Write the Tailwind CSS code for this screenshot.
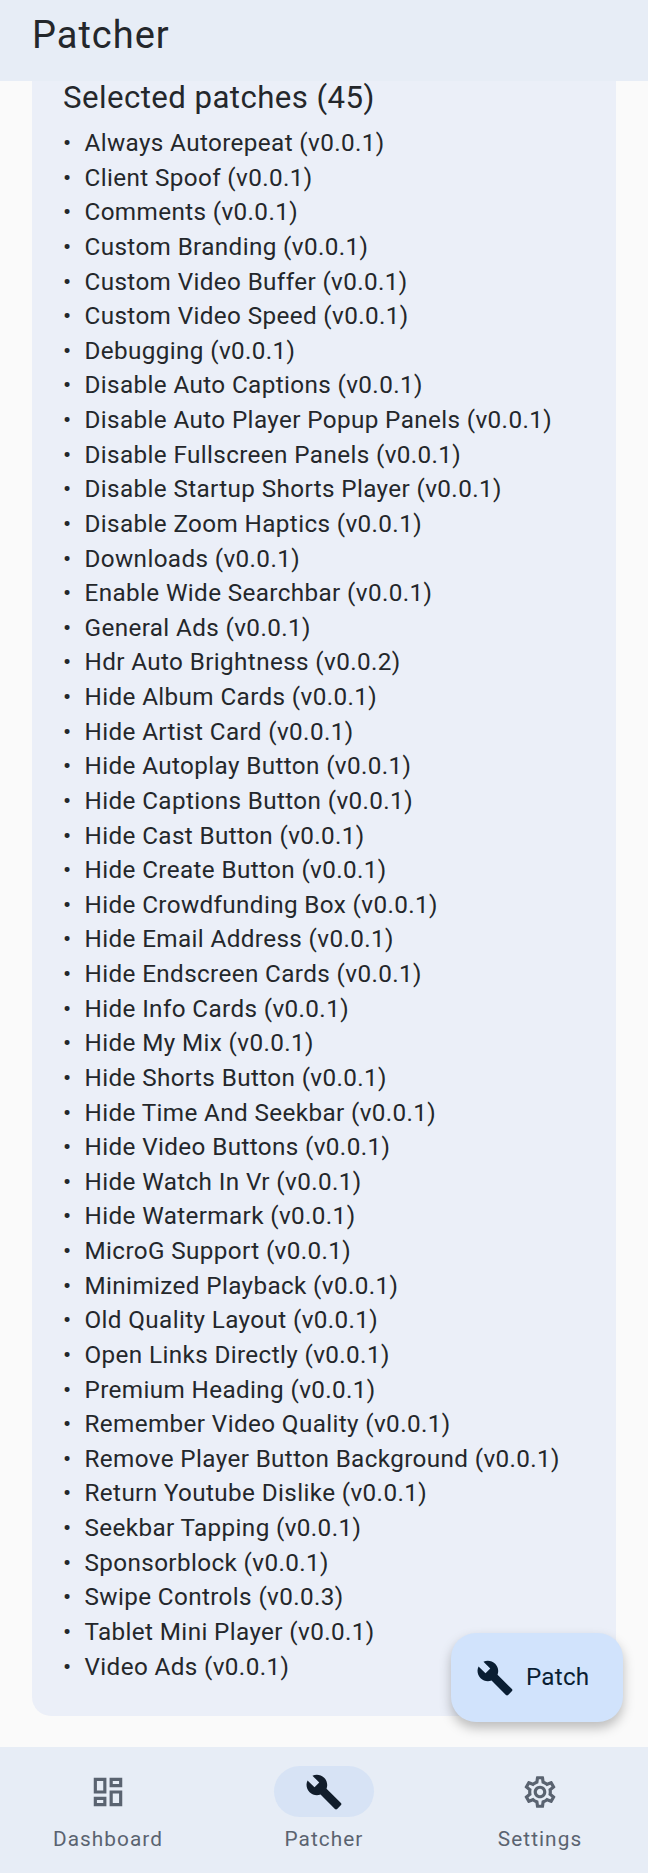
<!DOCTYPE html>
<html lang="en">
<head>
  <meta charset="UTF-8">
  <meta name="viewport" content="width=device-width, initial-scale=1.0">
  <title>Patcher</title>
  <script src="https://cdn.jsdelivr.net/npm/@tailwindcss/browser@4"></script>
</head>
<body class="bg-[#fafafa] font-['Roboto',sans-serif] text-[#24272b]">
  <div class="relative flex h-[1873px] w-[648px] flex-col overflow-hidden">
    <!-- App bar -->
    <header class="flex h-[81px] shrink-0 items-start bg-[#e7edf6] px-[32px] pt-[9px]">
      <h1 class="text-[38px] leading-[52px] tracking-[1px]">Patcher</h1>
    </header>

    <main class="flex-1">
      <!-- Selected patches card -->
      <section class="mx-[32px] h-[1635px] rounded-b-[19px] bg-[#ebeff8] pl-[31px]">
        <h2 class="text-[31.2px] leading-[34px] tracking-[0.43px]">Selected patches (45)</h2>
        <ul class="mt-[11px] text-[24.25px] leading-[34.63px] tracking-[0.38px]">
          <li class="flex"><span class="w-[21.5px]">•</span>Always Autorepeat (v0.0.1)</li>
          <li class="flex"><span class="w-[21.5px]">•</span>Client Spoof (v0.0.1)</li>
          <li class="flex"><span class="w-[21.5px]">•</span>Comments (v0.0.1)</li>
          <li class="flex"><span class="w-[21.5px]">•</span>Custom Branding (v0.0.1)</li>
          <li class="flex"><span class="w-[21.5px]">•</span>Custom Video Buffer (v0.0.1)</li>
          <li class="flex"><span class="w-[21.5px]">•</span>Custom Video Speed (v0.0.1)</li>
          <li class="flex"><span class="w-[21.5px]">•</span>Debugging (v0.0.1)</li>
          <li class="flex"><span class="w-[21.5px]">•</span>Disable Auto Captions (v0.0.1)</li>
          <li class="flex"><span class="w-[21.5px]">•</span>Disable Auto Player Popup Panels (v0.0.1)</li>
          <li class="flex"><span class="w-[21.5px]">•</span>Disable Fullscreen Panels (v0.0.1)</li>
          <li class="flex"><span class="w-[21.5px]">•</span>Disable Startup Shorts Player (v0.0.1)</li>
          <li class="flex"><span class="w-[21.5px]">•</span>Disable Zoom Haptics (v0.0.1)</li>
          <li class="flex"><span class="w-[21.5px]">•</span>Downloads (v0.0.1)</li>
          <li class="flex"><span class="w-[21.5px]">•</span>Enable Wide Searchbar (v0.0.1)</li>
          <li class="flex"><span class="w-[21.5px]">•</span>General Ads (v0.0.1)</li>
          <li class="flex"><span class="w-[21.5px]">•</span>Hdr Auto Brightness (v0.0.2)</li>
          <li class="flex"><span class="w-[21.5px]">•</span>Hide Album Cards (v0.0.1)</li>
          <li class="flex"><span class="w-[21.5px]">•</span>Hide Artist Card (v0.0.1)</li>
          <li class="flex"><span class="w-[21.5px]">•</span>Hide Autoplay Button (v0.0.1)</li>
          <li class="flex"><span class="w-[21.5px]">•</span>Hide Captions Button (v0.0.1)</li>
          <li class="flex"><span class="w-[21.5px]">•</span>Hide Cast Button (v0.0.1)</li>
          <li class="flex"><span class="w-[21.5px]">•</span>Hide Create Button (v0.0.1)</li>
          <li class="flex"><span class="w-[21.5px]">•</span>Hide Crowdfunding Box (v0.0.1)</li>
          <li class="flex"><span class="w-[21.5px]">•</span>Hide Email Address (v0.0.1)</li>
          <li class="flex"><span class="w-[21.5px]">•</span>Hide Endscreen Cards (v0.0.1)</li>
          <li class="flex"><span class="w-[21.5px]">•</span>Hide Info Cards (v0.0.1)</li>
          <li class="flex"><span class="w-[21.5px]">•</span>Hide My Mix (v0.0.1)</li>
          <li class="flex"><span class="w-[21.5px]">•</span>Hide Shorts Button (v0.0.1)</li>
          <li class="flex"><span class="w-[21.5px]">•</span>Hide Time And Seekbar (v0.0.1)</li>
          <li class="flex"><span class="w-[21.5px]">•</span>Hide Video Buttons (v0.0.1)</li>
          <li class="flex"><span class="w-[21.5px]">•</span>Hide Watch In Vr (v0.0.1)</li>
          <li class="flex"><span class="w-[21.5px]">•</span>Hide Watermark (v0.0.1)</li>
          <li class="flex"><span class="w-[21.5px]">•</span>MicroG Support (v0.0.1)</li>
          <li class="flex"><span class="w-[21.5px]">•</span>Minimized Playback (v0.0.1)</li>
          <li class="flex"><span class="w-[21.5px]">•</span>Old Quality Layout (v0.0.1)</li>
          <li class="flex"><span class="w-[21.5px]">•</span>Open Links Directly (v0.0.1)</li>
          <li class="flex"><span class="w-[21.5px]">•</span>Premium Heading (v0.0.1)</li>
          <li class="flex"><span class="w-[21.5px]">•</span>Remember Video Quality (v0.0.1)</li>
          <li class="flex"><span class="w-[21.5px]">•</span>Remove Player Button Background (v0.0.1)</li>
          <li class="flex"><span class="w-[21.5px]">•</span>Return Youtube Dislike (v0.0.1)</li>
          <li class="flex"><span class="w-[21.5px]">•</span>Seekbar Tapping (v0.0.1)</li>
          <li class="flex"><span class="w-[21.5px]">•</span>Sponsorblock (v0.0.1)</li>
          <li class="flex"><span class="w-[21.5px]">•</span>Swipe Controls (v0.0.3)</li>
          <li class="flex"><span class="w-[21.5px]">•</span>Tablet Mini Player (v0.0.1)</li>
          <li class="flex"><span class="w-[21.5px]">•</span>Video Ads (v0.0.1)</li>
        </ul>
      </section>
    </main>

    <!-- Patch FAB -->
    <button class="absolute left-[451px] top-[1633px] flex h-[89px] w-[172px] items-center rounded-[25px] bg-[#d1e3fc] pl-[25px] text-[24.25px] tracking-[0.2px] text-[#0a1e33] shadow-[0_6px_12px_rgba(0,0,0,0.25)]">
      <svg class="h-[38px] w-[38px]" viewBox="0 0 24 24" fill="currentColor"><path d="M22.7 19l-9.1-9.1c.9-2.3.4-5-1.5-6.9-2-2-5-2.4-7.4-1.3L9 6 6 9 1.6 4.7C.4 7.1.9 10.1 2.9 12.1c1.9 1.9 4.6 2.4 6.9 1.5l9.1 9.1c.4.4 1 .4 1.4 0l2.3-2.3c.5-.4.5-1.1.1-1.4z"/></svg>
      <span class="ml-[12px]">Patch</span>
    </button>

    <!-- Bottom nav -->
    <nav class="grid h-[126px] shrink-0 grid-cols-3 bg-[#e7edf6] pt-[19px] text-[20.8px] tracking-[1.05px] text-[#5a6370]">
      <a class="flex flex-col items-center">
        <span class="flex h-[51px] w-[100px] items-center justify-center">
          <svg class="h-[38px] w-[38px]" viewBox="0 0 24 24" fill="currentColor"><path d="M19 5v2h-4V5h4M9 5v6H5V5h4m10 8v6h-4v-6h4M9 17v2H5v-2h4M21 3h-8v6h8V3zM11 3H3v10h8V3zm10 8h-8v10h8V11zm-10 4H3v6h8v-6z"/></svg>
        </span>
        <span class="mt-[6px] leading-[32px]">Dashboard</span>
      </a>
      <a class="flex flex-col items-center">
        <span class="flex h-[51px] w-[100px] items-center justify-center rounded-full bg-[#d7e3f5] text-[#111d2b]">
          <svg class="h-[38px] w-[38px]" viewBox="0 0 24 24" fill="currentColor"><path d="M22.7 19l-9.1-9.1c.9-2.3.4-5-1.5-6.9-2-2-5-2.4-7.4-1.3L9 6 6 9 1.6 4.7C.4 7.1.9 10.1 2.9 12.1c1.9 1.9 4.6 2.4 6.9 1.5l9.1 9.1c.4.4 1 .4 1.4 0l2.3-2.3c.5-.4.5-1.1.1-1.4z"/></svg>
        </span>
        <span class="mt-[6px] leading-[32px]">Patcher</span>
      </a>
      <a class="flex flex-col items-center">
        <span class="flex h-[51px] w-[100px] items-center justify-center">
          <svg class="h-[38px] w-[38px]" viewBox="0 0 24 24" fill="currentColor"><path d="M19.43 12.98c.04-.32.07-.64.07-.98 0-.34-.03-.66-.07-.98l2.11-1.65c.19-.15.24-.42.12-.64l-2-3.46c-.09-.16-.26-.25-.44-.25-.06 0-.12.01-.17.03l-2.49 1c-.52-.4-1.08-.73-1.69-.98l-.38-2.65C14.46 2.18 14.25 2 14 2h-4c-.25 0-.46.18-.49.42l-.38 2.65c-.61.25-1.17.59-1.69.98l-2.49-1c-.06-.02-.12-.03-.18-.03-.17 0-.34.09-.43.25l-2 3.46c-.13.22-.07.49.12.64l2.11 1.65c-.04.32-.07.65-.07.98 0 .33.03.66.07.98l-2.11 1.65c-.19.15-.24.42-.12.64l2 3.46c.09.16.26.25.44.25.06 0 .12-.01.17-.03l2.49-1c.52.4 1.08.73 1.69.98l.38 2.65c.03.24.24.42.49.42h4c.25 0 .46-.18.49-.42l.38-2.65c.61-.25 1.17-.59 1.69-.98l2.49 1c.06.02.12.03.18.03.17 0 .34-.09.43-.25l2-3.46c.12-.22.07-.49-.12-.64l-2.11-1.65zm-1.98-1.71c.04.31.05.52.05.73 0 .21-.02.43-.05.73l-.14 1.13.89.7 1.08.84-.7 1.21-1.27-.51-1.04-.42-.9.68c-.43.32-.84.56-1.25.73l-1.06.43-.16 1.13-.2 1.35h-1.4l-.19-1.35-.16-1.13-1.06-.43c-.43-.18-.83-.41-1.23-.71l-.91-.7-1.06.43-1.27.51-.7-1.21 1.08-.84.89-.7-.14-1.13c-.03-.31-.05-.54-.05-.74s.02-.43.05-.73l.14-1.13-.89-.7-1.08-.84.7-1.21 1.27.51 1.04.42.9-.68c.43-.32.84-.56 1.25-.73l1.06-.43.16-1.13.2-1.35h1.39l.19 1.35.16 1.13 1.06.43c.43.18.83.41 1.23.71l.91.7 1.06-.43 1.27-.51.7 1.21-1.07.85-.89.7.14 1.13zM12 8c-2.21 0-4 1.79-4 4s1.79 4 4 4 4-1.79 4-4-1.79-4-4-4zm0 6c-1.1 0-2-.9-2-2s.9-2 2-2 2 .9 2 2-.9 2-2 2z"/></svg>
        </span>
        <span class="mt-[6px] leading-[32px]">Settings</span>
      </a>
    </nav>
  </div>
</body>
</html>
